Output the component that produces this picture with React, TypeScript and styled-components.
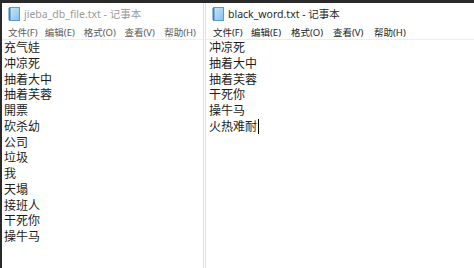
import React from "react";
import styled, {createGlobalStyle} from "styled-components";

const Global = createGlobalStyle`
html, body {
  margin: 0;
  padding: 0;
  background: #2a2a2a;
  overflow: hidden;
}
`;

const cjk = `"Noto Sans", "Noto Sans CJK SC", sans-serif`;

const Screen = styled.div`
display: flex;
flex-direction: column;
width: 474px;
height: 268px;
background: #2a2a2a;
`;

const TopEdge = styled.div`
height: 3px;
flex-shrink: 0;
`;

const Desk = styled.div`
display: flex;
flex: 1;
min-height: 0;
padding-left: 2px;
`;

const Window = styled.div<{ $w?: number; $active?: boolean }>`
display: flex;
flex-direction: column;
background: #ffffff;
width: ${(p) => (p.$w ? `${p.$w}px` : "auto")};
flex: ${(p) => (p.$w ? "0 0 auto" : "1")};
border-left: ${(p) => (p.$active ? "3px double #e0e0e0" : "none")};
overflow: hidden;
`;

const TitleBar = styled.div<{ $active?: boolean }>`
display: flex;
align-items: center;
gap: 4px;
height: 21px;
padding-left: ${(p) => (p.$active ? "6px" : "6px")};
flex-shrink: 0;
`;

const Title = styled.span<{ $active?: boolean }>`
font-family: ${cjk};
font-size: 10.5px;
color: ${(p) => (p.$active ? "#1f1f1f" : "#9a9a9a")};
white-space: nowrap;
`;

const MenuBar = styled.div<{ $active?: boolean }>`
display: flex;
align-items: center;
height: 15px;
padding-left: ${(p) => (p.$active ? "7px" : "6px")};
border-bottom: 1px solid #eeeeee;
flex-shrink: 0;
`;

const MenuItem = styled.span<{ $w: number; $active?: boolean }>`
width: ${(p) => p.$w}px;
font-family: ${cjk};
font-size: 9.5px;
color: ${(p) => (p.$active ? "#222222" : "#5a5a5a")};
white-space: nowrap;
`;

const Editor = styled.div<{ $active?: boolean }>`
flex: 1;
padding-left: ${(p) => (p.$active ? "3px" : "2px")};
`;

const Line = styled.div`
font-family: ${cjk};
font-size: 12px;
line-height: 15.75px;
height: 15.75px;
color: #1c1c1c;
white-space: nowrap;
display: flex;
align-items: center;
`;

const Caret = styled.span`
display: inline-block;
width: 1px;
height: 15px;
background: #000;
margin-left: 1px;
`;

const NotepadIcon = () => (
  <svg width="12" height="14" viewBox="0 0 12 14">
    <defs>
      <linearGradient id="np" x1="0" y1="0" x2="1" y2="1">
        <stop offset="0" stopColor="#cfeafb" />
        <stop offset="1" stopColor="#7fc0e8" />
      </linearGradient>
    </defs>
    <rect x="1.5" y="0.5" width="10" height="13" fill="url(#np)" stroke="#5f9cc8" />
    <rect x="0.5" y="1" width="2" height="12" fill="#3f7fb3" />
    <line x1="4" y1="4" x2="9.5" y2="4" stroke="#a9d3ee" />
    <line x1="4" y1="7" x2="9.5" y2="7" stroke="#a9d3ee" />
  </svg>
);

const menus = [
  {label: "文件(F)", w: 38},
  {label: "编辑(E)", w: 40},
  {label: "格式(O)", w: 42},
  {label: "查看(V)", w: 41},
  {label: "帮助(H)", w: 40},
];

const leftLines = [
  "充气娃", "冲凉死", "抽着大中", "抽着芙蓉", "開票", "砍杀幼", "公司",
  "垃圾", "我", "天塌", "接班人", "干死你", "操牛马",
];

const rightLines = ["冲凉死", "抽着大中", "抽着芙蓉", "干死你", "操牛马", "火热难耐"];

const Notepad = ({title, lines, active, width}: {
  title: string; lines: string[]; active?: boolean; width?: number;
}) => (
  <Window $w={width} $active={active}>
    <TitleBar $active={active}>
      <NotepadIcon />
      <Title $active={active}>{title}</Title>
    </TitleBar>
    <MenuBar $active={active}>
      {menus.map((m) => (
        <MenuItem key={m.label} $w={m.w} $active={active}>{m.label}</MenuItem>
      ))}
    </MenuBar>
    <Editor $active={active}>
      {lines.map((l, i) => (
        <Line key={i}>
          {l}
          {active && i === lines.length - 1 && <Caret />}
        </Line>
      ))}
    </Editor>
  </Window>
);

const App = () => (
  <Screen>
    <Global />
    <TopEdge />
    <Desk>
      <Notepad title="jieba_db_file.txt - 记事本" lines={leftLines} width={201} />
      <Notepad title="black_word.txt - 记事本" lines={rightLines} active />
    </Desk>
  </Screen>
);

export default App;
